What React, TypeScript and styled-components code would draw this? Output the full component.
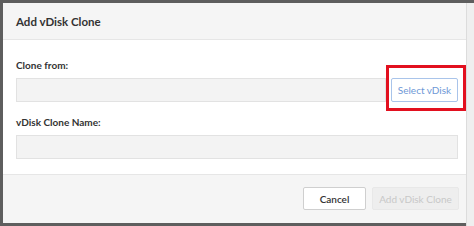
import React from "react";
import styled, { createGlobalStyle } from "styled-components";

const Global = createGlobalStyle`
  html, body { margin: 0; padding: 0; }
  body {
    width: 474px;
    height: 226px;
    overflow: hidden;
    background: #5e5e5e;
    font-family: Lato, "Open Sans", "Liberation Sans", sans-serif;
  }
`;

const Page = styled.div`
  display: flex;
  height: 226px;
  padding: 3px 0 0 3px;
  box-sizing: border-box;
`;

const Side = styled.div`
  flex: 1;
  background: #efefef;
  border-left: 1px solid #dcdcdc;
`;

const Modal = styled.div`
  width: 463px;
  height: 220px;
  display: flex;
  flex-direction: column;
  background: #fff;
`;

const Header = styled.div`
  height: 36px;
  display: flex;
  align-items: center;
  padding-left: 13px;
  background: #f5f5f5;
  border-bottom: 1px solid #e6e6e6;
`;

const Title = styled.h1`
  margin: 0;
  font-size: 11.5px;
  font-weight: 700;
  color: #333;
  padding-top: 1px;
`;

const Body = styled.div`
  display: flex;
  flex-direction: column;
  padding: 18px 8px 15px 13px;
`;

const Label = styled.label<{ $gap?: number }>`
  font-size: 10px;
  line-height: 14px;
  font-weight: 700;
  color: #333;
  margin-top: ${(p) => p.$gap ?? 0}px;
  margin-bottom: 6px;
`;

const Row = styled.div`
  display: flex;
  gap: 5px;
`;

const Input = styled.div`
  flex: 1;
  height: 24px;
  box-sizing: border-box;
  background: #f3f3f3;
  border: 1px solid #e2e2e2;
`;

const Anchor = styled.div`
  position: relative;
  display: flex;
`;

const Highlight = styled.div`
  position: absolute;
  left: -5px;
  right: -8px;
  top: -13px;
  bottom: -9px;
  border: 3px solid #e2101f;
  pointer-events: none;
`;

type Variant = "outline" | "default" | "disabled";

const Button = styled.button<{ $variant: Variant; $w: number }>`
  width: ${(p) => p.$w}px;
  height: ${(p) => (p.$variant === "outline" ? 24 : 23)}px;
  box-sizing: border-box;
  padding: 0;
  font-family: inherit;
  font-size: 10px;
  cursor: pointer;
  background: ${(p) => (p.$variant === "disabled" ? "#eeeeee" : "#ffffff")};
  border: 1px solid
    ${(p) =>
      p.$variant === "outline"
        ? "#a9c4ea"
        : p.$variant === "disabled"
        ? "#e8e8e8"
        : "#cfcfcf"};
  color: ${(p) =>
    p.$variant === "outline"
      ? "#6e98d6"
      : p.$variant === "disabled"
      ? "#c8c8c8"
      : "#333"};
  font-weight: ${(p) => (p.$variant === "default" ? 600 : 400)};
  border-radius: 2px;
`;

const Footer = styled.div`
  flex: 1;
  display: flex;
  justify-content: flex-end;
  align-items: flex-start;
  gap: 6px;
  padding: 12px 7px 0 0;
  background: #f5f5f5;
  border-top: 1px solid #e6e6e6;
`;

export default function App() {
  return (
    <>
      <Global />
      <Page>
        <Modal>
          <Header>
            <Title>Add vDisk Clone</Title>
          </Header>
          <Body>
            <Label>Clone from:</Label>
            <Row>
              <Input />
              <Anchor>
                <Button $variant="outline" $w={67}>
                  Select vDisk
                </Button>
                <Highlight />
              </Anchor>
            </Row>
            <Label $gap={13}>vDisk Clone Name:</Label>
            <Row>
              <Input />
            </Row>
          </Body>
          <Footer>
            <Button $variant="default" $w={63}>
              Cancel
            </Button>
            <Button $variant="disabled" $w={87} disabled>
              Add vDisk Clone
            </Button>
          </Footer>
        </Modal>
        <Side />
      </Page>
    </>
  );
}
